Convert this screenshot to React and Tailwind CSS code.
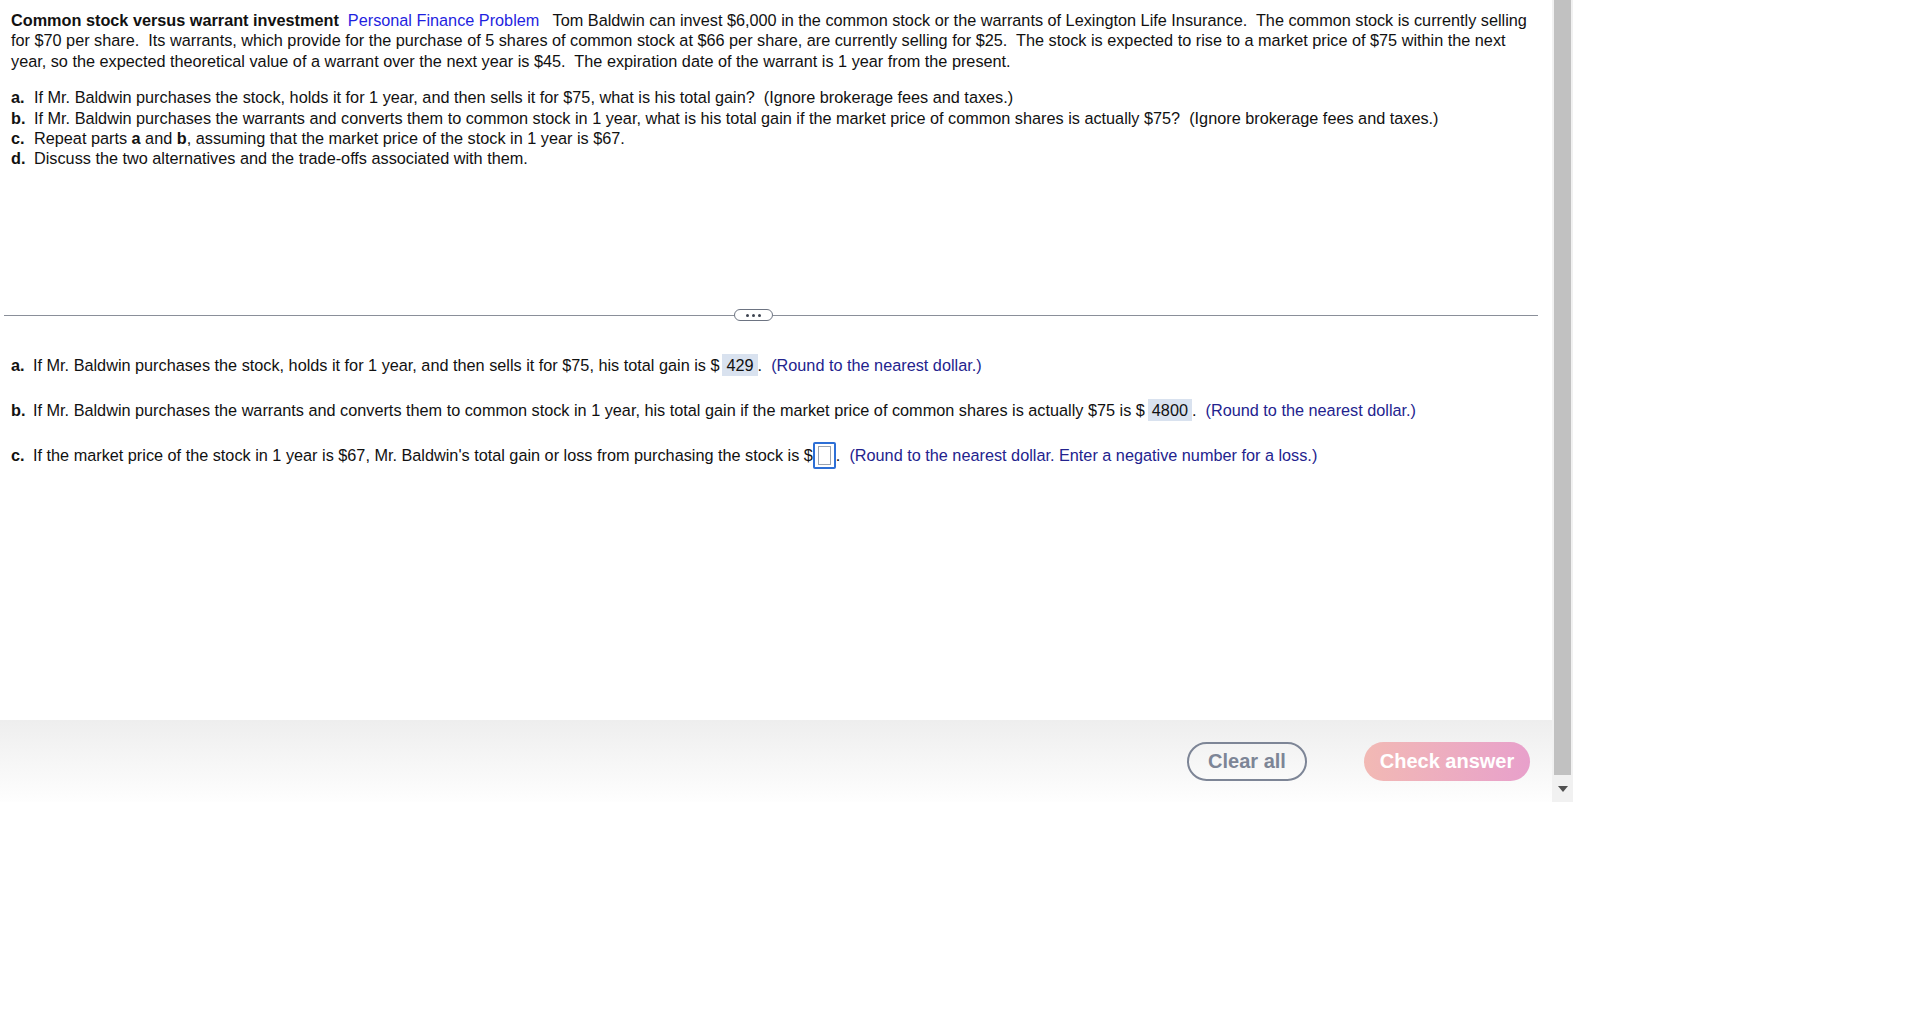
export default function App() {
  const round = "text-[#23238e]";

  return (
    <div className="min-h-screen w-full bg-white font-['Liberation_Sans',Arial,sans-serif] text-[16.25px] text-[#111]">
      <div className="flex h-[802px] w-[1573px]">
        {/* main frame */}
        <div className="flex w-[1552px] flex-col">
          <div className="flex-1">
            {/* question */}
            <div className="h-[309px] pl-[11px] pt-[10px] leading-[20.4px]">
              <p className="whitespace-pre">
                <span className="font-bold">Common stock versus warrant investment</span>
                {"  "}
                <span className="text-[#1f1fe0]">Personal Finance Problem</span>
                {"   Tom Baldwin can invest $6,000 in the common stock or the warrants of Lexington Life Insurance.  The common stock is currently selling"}
                <br />
                {"for $70 per share.  Its warrants, which provide for the purchase of 5 shares of common stock at $66 per share, are currently selling for $25.  The stock is expected to rise to a market price of $75 within the next"}
                <br />
                {"year, so the expected theoretical value of a warrant over the next year is $45.  The expiration date of the warrant is 1 year from the present."}
              </p>
              <ul className="mt-[16px]">
                <li className="flex">
                  <span className="w-[23px] font-bold">a.</span>
                  <span>If Mr. Baldwin purchases the stock, holds it for 1 year, and then sells it for $75, what is his total gain?&nbsp; (Ignore brokerage fees and taxes.)</span>
                </li>
                <li className="flex">
                  <span className="w-[23px] font-bold">b.</span>
                  <span>If Mr. Baldwin purchases the warrants and converts them to common stock in 1 year, what is his total gain if the market price of common shares is actually $75?&nbsp; (Ignore brokerage fees and taxes.)</span>
                </li>
                <li className="flex">
                  <span className="w-[23px] font-bold">c.</span>
                  <span>
                    Repeat parts <b>a</b> and <b>b</b>, assuming that the market price of the stock in 1 year is $67.
                  </span>
                </li>
                <li className="flex">
                  <span className="w-[23px] font-bold">d.</span>
                  <span>Discuss the two alternatives and the trade-offs associated with them.</span>
                </li>
              </ul>
            </div>

            {/* divider */}
            <div className="flex h-[12px] items-center pl-[4px]">
              <div className="h-px w-[730px] bg-[#8a8f99]" />
              <div className="flex h-[12px] w-[39px] items-center justify-center gap-[3px] rounded-full border border-[#6d7482] bg-white">
                <span className="h-[3px] w-[3px] rounded-full bg-[#3d4450]" />
                <span className="h-[3px] w-[3px] rounded-full bg-[#3d4450]" />
                <span className="h-[3px] w-[3px] rounded-full bg-[#3d4450]" />
              </div>
              <div className="h-px w-[765px] bg-[#8a8f99]" />
            </div>

            {/* answers */}
            <div className="flex flex-col gap-[17px] pl-[11px] pt-[30px]">
              <div className="flex h-[28px] items-center whitespace-pre">
                <span className="w-[22px] font-bold">a.</span>
                <span>{"If Mr. Baldwin purchases the stock, holds it for 1 year, and then sells it for $75, his total gain is $"}</span>
                <span className="ml-[3px] flex h-[22px] items-center bg-[#d9e2ef] px-[4px]">429</span>
                <span>{".  "}</span>
                <span className={round}>(Round to the nearest dollar.)</span>
              </div>
              <div className="flex h-[28px] items-center whitespace-pre">
                <span className="w-[22px] font-bold">b.</span>
                <span>{"If Mr. Baldwin purchases the warrants and converts them to common stock in 1 year, his total gain if the market price of common shares is actually $75 is $"}</span>
                <span className="ml-[3px] flex h-[22px] items-center bg-[#d9e2ef] px-[4px]">4800</span>
                <span>{".  "}</span>
                <span className={round}>(Round to the nearest dollar.)</span>
              </div>
              <div className="flex h-[28px] items-center whitespace-pre">
                <span className="w-[22px] font-bold">c.</span>
                <span>{"If the market price of the stock in 1 year is $67, Mr. Baldwin's total gain or loss from purchasing the stock is $"}</span>
                <span className="flex h-[27px] w-[23px] items-center justify-center rounded-[2px] border-2 border-[#2d6fd6] bg-white">
                  <span className="h-[19px] w-[13px] border border-[#9aa3b0]" />
                </span>
                <span>{".  "}</span>
                <span className={round}>(Round to the nearest dollar. Enter a negative number for a loss.)</span>
              </div>
            </div>
          </div>

          {/* footer */}
          <div className="flex h-[82px] items-center justify-end gap-[57px] bg-linear-to-b from-[#eeeeee] to-[#fefefe] pr-[22px]">
            <button className="h-[39px] w-[120px] rounded-full border-2 border-[#7d8596] text-[20px] font-bold text-[#7d8596]">
              Clear all
            </button>
            <button className="h-[39px] w-[166px] rounded-full bg-linear-to-r from-[#f2b9b4] to-[#e8a0cb] text-[20px] font-bold text-white">
              Check answer
            </button>
          </div>
        </div>

        {/* scrollbar */}
        <div className="flex w-[21px] flex-col bg-[#f1f1f1]">
          <div className="mx-[2px] flex-1 bg-[#c1c1c1]" />
          <div className="flex h-[27px] items-center justify-center">
            <svg width="10" height="6" viewBox="0 0 10 6">
              <path d="M0 0 L10 0 L5 6 Z" fill="#505050" />
            </svg>
          </div>
        </div>
      </div>
    </div>
  );
}
